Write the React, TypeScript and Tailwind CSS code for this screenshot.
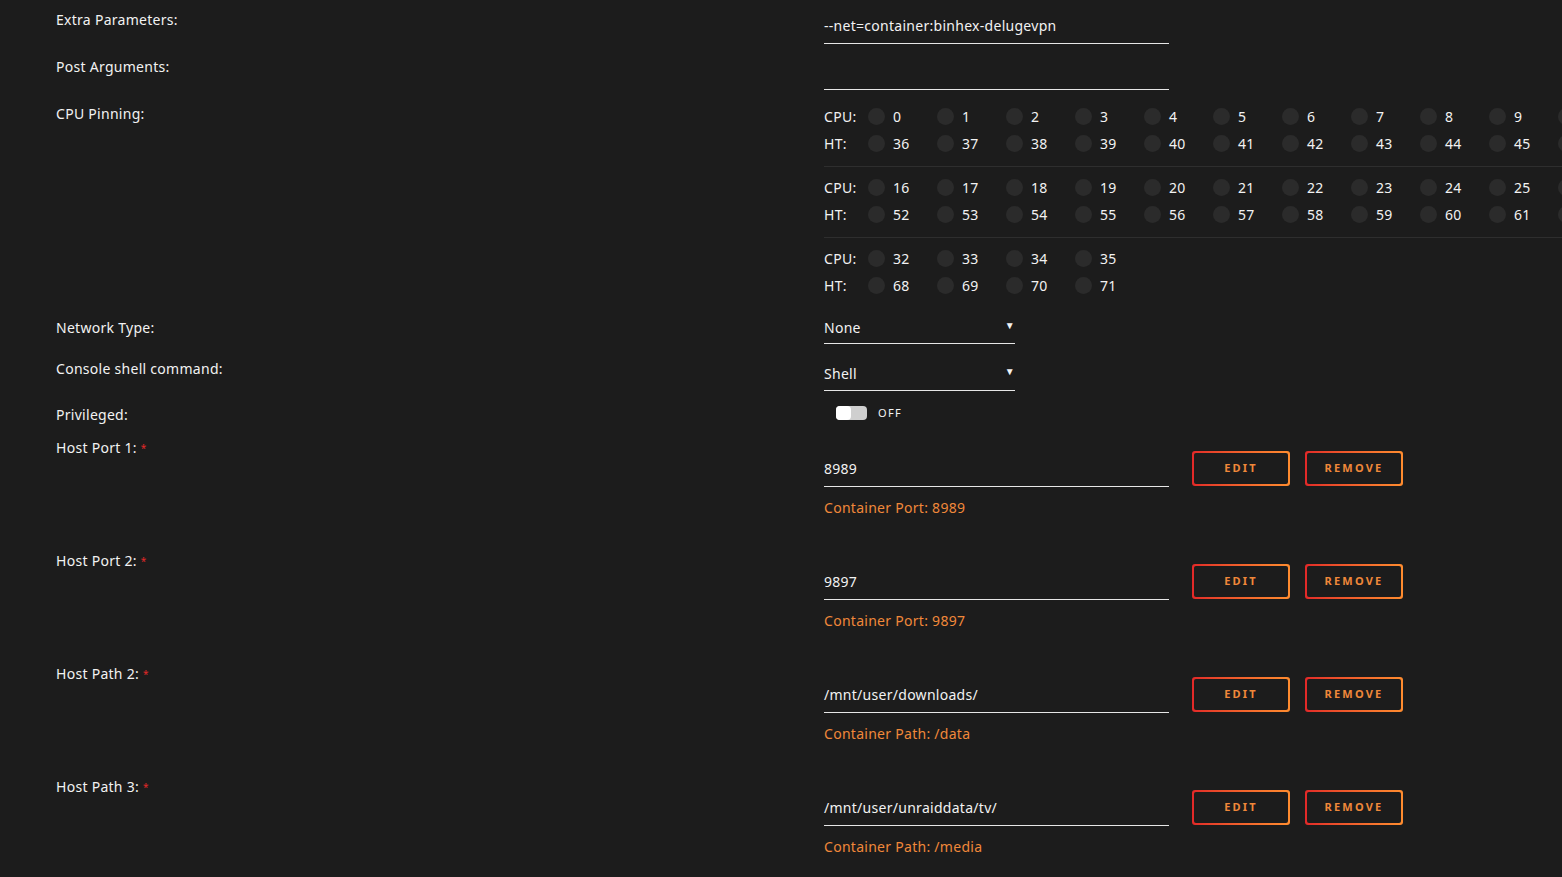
const cpuGroups = [
  { cpu: [0, 1, 2, 3, 4, 5, 6, 7, 8, 9], ht: [36, 37, 38, 39, 40, 41, 42, 43, 44, 45], more: true },
  { cpu: [16, 17, 18, 19, 20, 21, 22, 23, 24, 25], ht: [52, 53, 54, 55, 56, 57, 58, 59, 60, 61], more: true },
  { cpu: [32, 33, 34, 35], ht: [68, 69, 70, 71], more: false },
];

const mappings = [
  { label: "Host Port 1:", value: "8989", note: "Container Port: 8989" },
  { label: "Host Port 2:", value: "9897", note: "Container Port: 9897" },
  { label: "Host Path 2:", value: "/mnt/user/downloads/", note: "Container Path: /data" },
  { label: "Host Path 3:", value: "/mnt/user/unraiddata/tv/", note: "Container Path: /media" },
];

function Label({ text, pt, required }: { text: string; pt: string; required?: boolean }) {
  return (
    <div className={`w-[824px] shrink-0 pl-14 leading-5 ${pt}`}>
      {text}
      {required ? <span className="ml-1 align-top text-[10px] text-[#e22828]">*</span> : null}
    </div>
  );
}

function CpuLine({ name, nums, more }: { name: string; nums: number[]; more: boolean }) {
  return (
    <div className="flex h-[27px] items-center">
      <div className="w-[44px] shrink-0">{name}</div>
      {nums.map((n) => (
        <div key={n} className="flex w-[69px] shrink-0 items-center gap-2">
          <span className="size-[17px] rounded-full bg-[#2b2b2b]" />
          <span>{n}</span>
        </div>
      ))}
      {more ? <span className="size-[17px] shrink-0 rounded-full bg-[#2b2b2b]" /> : null}
    </div>
  );
}

function GradButton({ text }: { text: string }) {
  return (
    <div className="h-[35px] w-[98px] rounded-[3px] bg-gradient-to-r from-[#e22828] to-[#ff8c2f] p-[2px]">
      <div className="flex h-full items-center justify-center rounded-[2px] bg-[#1c1c1c] text-[11px] font-bold tracking-[0.2em] text-[#f0883a]">
        {text}
      </div>
    </div>
  );
}

export default function App() {
  return (
    <div className="h-[877px] w-[1562px] overflow-hidden bg-[#1c1c1c] text-[14px] tracking-[0.02em] text-[#f2f2f2] [font-family:'Noto_Sans',sans-serif]">
      <div className="flex h-[47px]">
        <Label text="Extra Parameters:" pt="pt-[10px]" />
        <div className="h-[44px] w-[345px] border-b border-[#e6e6e6] pt-[16px] leading-5">--net=container:binhex-delugevpn</div>
      </div>
      <div className="flex h-[47px]">
        <Label text="Post Arguments:" pt="pt-[10px]" />
        <div className="h-[43px] w-[345px] border-b border-[#e6e6e6]" />
      </div>
      <div className="flex h-[214px]">
        <Label text="CPU Pinning:" pt="pt-[10px]" />
        <div className="min-w-0 flex-1 overflow-hidden pt-[9px]">
          {cpuGroups.map((g, i) => (
            <div key={i} className={i < 2 ? "mb-[7px] border-b border-[#2e2e2e] pb-[9px]" : ""}>
              <CpuLine name="CPU:" nums={g.cpu} more={g.more} />
              <CpuLine name="HT:" nums={g.ht} more={g.more} />
            </div>
          ))}
        </div>
      </div>
      <div className="flex h-[46px]">
        <Label text="Network Type:" pt="pt-[10px]" />
        <div className="flex h-[36px] w-[191px] items-end justify-between border-b border-[#e6e6e6] pb-[5px] leading-5">
          <span>None</span>
          <span className="pb-[3px] text-[10px]">▼</span>
        </div>
      </div>
      <div className="flex h-[46px]">
        <Label text="Console shell command:" pt="pt-[5px]" />
        <div className="flex h-[37px] w-[191px] items-end justify-between border-b border-[#e6e6e6] pb-[6px] leading-5">
          <span>Shell</span>
          <span className="pb-[3px] text-[10px]">▼</span>
        </div>
      </div>
      <div className="flex h-[36px]">
        <Label text="Privileged:" pt="pt-[5px]" />
        <div className="ml-3 flex h-[26px] items-center gap-[11px] pt-[0px]">
          <div className="flex h-[14px] w-[31px] items-center rounded-[4px] bg-[#cfcfcf]">
            <span className="h-[14px] w-[15px] rounded-[4px] bg-white" />
          </div>
          <span className="text-[11px] tracking-[0.12em]">OFF</span>
        </div>
      </div>
      {mappings.map((m) => (
        <div key={m.label} className="flex h-[113px] items-start">
          <Label text={m.label} pt="pt-[2px]" required />
          <div className="w-[345px] shrink-0 pt-[23px]">
            <div className="border-b border-[#e6e6e6] pb-[7px] leading-5">{m.value}</div>
            <div className="mt-[11px] leading-5 text-[#f0883a]">{m.note}</div>
          </div>
          <div className="ml-[23px] flex gap-[15px] pt-[15px]">
            <GradButton text="EDIT" />
            <GradButton text="REMOVE" />
          </div>
        </div>
      ))}
    </div>
  );
}
